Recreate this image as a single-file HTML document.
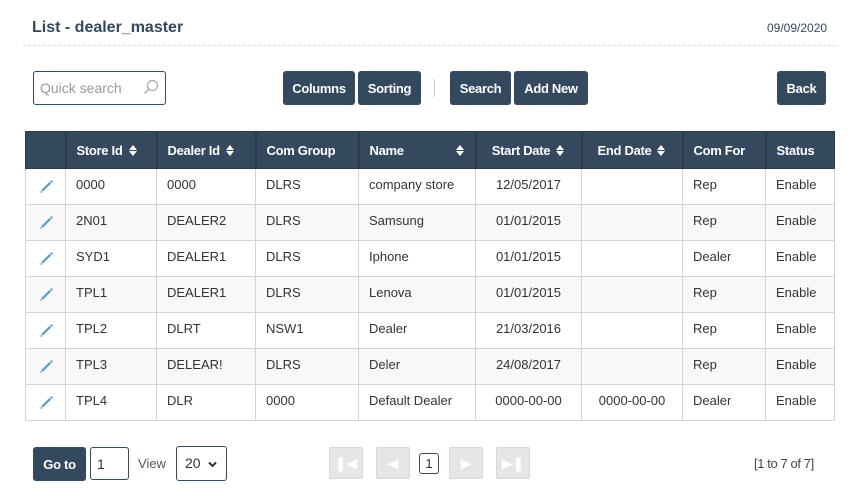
<!DOCTYPE html><html><head><style>
*{margin:0;padding:0;box-sizing:border-box}
body{width:852px;height:502px;background:#fff;font-family:"Liberation Sans",sans-serif;position:relative;overflow:hidden;color:#333}
.a{position:absolute}
.btn{position:absolute;background:#34495e;color:#fff;font-size:13px;font-weight:bold;border-radius:3px;display:flex;align-items:center;justify-content:center;letter-spacing:-0.3px}
table{position:absolute;left:25px;top:131px;border-collapse:collapse;font-size:13px}
th{background:#34495e;color:#fff;text-align:left;height:37px;padding:0 10px;border:1px solid #2a3b4c;border-left:2px solid #2a3b4c;font-size:13px;letter-spacing:-0.3px;white-space:nowrap}
td{height:36px;padding:0 10px 4px;border:1px solid #d4d4d4;white-space:nowrap}
tr:nth-child(odd) td{background:#f8f8f8}
.s{display:inline-block;vertical-align:middle;margin-left:6px;width:9px;height:12px;position:relative}
.s:before{content:"";position:absolute;left:0;top:0;border-left:4.5px solid transparent;border-right:4.5px solid transparent;border-bottom:5px solid #fff}
.s:after{content:"";position:absolute;left:0;top:6px;border-left:4.5px solid transparent;border-right:4.5px solid transparent;border-top:5px solid #fff}
.pg{position:absolute;top:447px;width:34px;height:32px;background:#e6e6e6;border:1px solid #d8d8d8;border-radius:2px;color:#fff;display:flex;align-items:center;justify-content:center;font-size:14px}
</style></head><body>
<div class="a" style="left:32px;top:19px;font-size:16px;font-weight:bold;color:#34495e">List - dealer_master</div>
<div class="a" style="left:767px;top:21px;font-size:12px;color:#34495e">09/09/2020</div>
<div class="a" style="left:23px;top:45px;width:813px;border-top:1px dashed #ddd"></div>
<div class="a" style="left:33px;top:71px;width:133px;height:34px;border:1px solid #34495e;border-radius:3px;font-size:14px;color:#999;padding:8px 6px">Quick search</div>
<svg class="a" style="left:143px;top:79px" width="16" height="16" viewBox="0 0 16 16"><circle cx="9.5" cy="6.5" r="5" fill="none" stroke="#aaa" stroke-width="1.2"/><path d="M6 10L1.5 14.5" stroke="#aaa" stroke-width="1.3"/></svg>
<div class="btn" style="left:283px;top:71px;width:72px;height:34px">Columns</div>
<div class="btn" style="left:358px;top:71px;width:63px;height:34px">Sorting</div>
<div class="a" style="left:434px;top:79px;height:18px;border-left:1px solid #ccc"></div>
<div class="btn" style="left:450px;top:71px;width:61px;height:34px">Search</div>
<div class="btn" style="left:514px;top:71px;width:74px;height:34px">Add New</div>
<div class="btn" style="left:777px;top:71px;width:49px;height:34px">Back</div>
<table>
<tr><th style="width:40px;border-left:1px solid #2a3b4c"></th><th style="width:91px">Store Id<span class="s"></span></th><th style="width:99px">Dealer Id<span class="s"></span></th><th style="width:103px">Com Group</th><th style="width:117px">Name<span style="float:right;margin-top:2px" class="s"></span></th><th style="width:106px;text-align:center">Start Date<span class="s"></span></th><th style="width:101px;text-align:center">End Date<span class="s"></span></th><th style="width:83px">Com For</th><th style="width:69px">Status</th></tr>
<tr><td>P</td><td>0000</td><td>0000</td><td>DLRS</td><td>company store</td><td style="text-align:center">12/05/2017</td><td></td><td>Rep</td><td>Enable</td></tr>
<tr><td>P</td><td>2N01</td><td>DEALER2</td><td>DLRS</td><td>Samsung</td><td style="text-align:center">01/01/2015</td><td></td><td>Rep</td><td>Enable</td></tr>
<tr><td>P</td><td>SYD1</td><td>DEALER1</td><td>DLRS</td><td>Iphone</td><td style="text-align:center">01/01/2015</td><td></td><td>Dealer</td><td>Enable</td></tr>
<tr><td>P</td><td>TPL1</td><td>DEALER1</td><td>DLRS</td><td>Lenova</td><td style="text-align:center">01/01/2015</td><td></td><td>Rep</td><td>Enable</td></tr>
<tr><td>P</td><td>TPL2</td><td>DLRT</td><td>NSW1</td><td>Dealer</td><td style="text-align:center">21/03/2016</td><td></td><td>Rep</td><td>Enable</td></tr>
<tr><td>P</td><td>TPL3</td><td>DELEAR!</td><td>DLRS</td><td>Deler</td><td style="text-align:center">24/08/2017</td><td></td><td>Rep</td><td>Enable</td></tr>
<tr><td>P</td><td>TPL4</td><td>DLR</td><td>0000</td><td>Default Dealer</td><td style="text-align:center">0000-00-00</td><td style="text-align:center">0000-00-00</td><td>Dealer</td><td>Enable</td></tr>
</table>
<script>
document.querySelectorAll('td:first-child').forEach(function(t){t.innerHTML='<svg width="15" height="15" viewBox="0 0 14 14" style="display:block;margin-top:4px"><path d="M2.2 10.3L9.8 2.7L11.3 4.2L3.7 11.8Z" fill="#5b9fc3"/><path d="M10.4 2.1L11.2 1.3Q11.6 1 12 1.3L12.7 2Q13 2.4 12.7 2.8L11.9 3.6Z" fill="#5b9fc3"/><path d="M1.8 10.8L3.2 12.2L1 13Z" fill="#5b9fc3"/></svg>';t.style.paddingLeft='13px'});
</script>
<div class="btn" style="left:33px;top:447px;width:53px;height:34px;font-size:13px">Go to</div>
<div class="a" style="left:90px;top:447px;width:39px;height:33px;border:1px solid #34495e;border-radius:3px;font-size:14px;padding:8px 6px">1</div>
<div class="a" style="left:138px;top:456px;font-size:13px;color:#555">View</div>
<div class="a" style="left:176px;top:446px;width:51px;height:35px;border:1px solid #34495e;border-radius:3px;font-size:14px;padding:8px 8px;white-space:nowrap">20<svg width="9" height="7" viewBox="0 0 9 7" style="margin-left:7px"><path d="M1 1.5L4.5 5L8 1.5" fill="none" stroke="#333" stroke-width="2"/></svg></div>
<div class="pg" style="left:329px">&#10074;&#9664;</div>
<div class="pg" style="left:376px">&#9664;</div>
<div class="a" style="left:419px;top:453px;width:20px;height:21px;border:1px solid #34495e;border-radius:3px;font-size:13px;text-align:center;line-height:19px">1</div>
<div class="pg" style="left:449px">&#9654;</div>
<div class="pg" style="left:496px">&#9654;&#10074;</div>
<div class="a" style="left:754px;top:456px;font-size:13px;color:#444;letter-spacing:-0.4px">[1 to 7 of 7]</div>
</body></html>
